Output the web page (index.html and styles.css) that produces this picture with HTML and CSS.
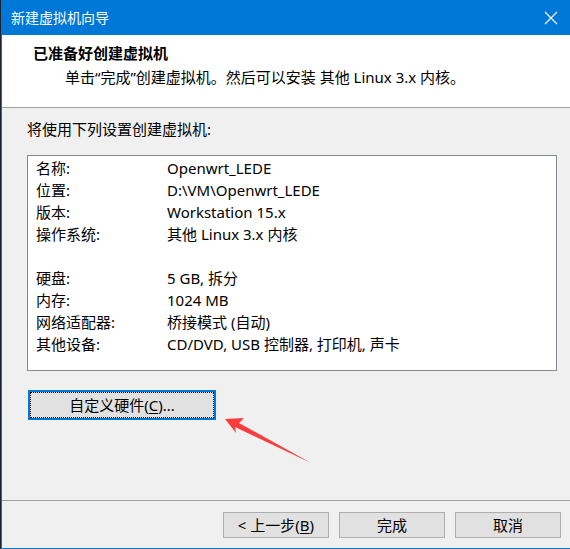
FILE: index.html
```html
<!DOCTYPE html>
<html lang="zh-CN">
<head>
<meta charset="utf-8">
<title>新建虚拟机向导</title>
<link rel="stylesheet" href="styles.css">
</head>
<body>
<div class="window">
  <div class="titlebar">
    <span class="title">新建虚拟机向导</span>
    <svg class="close" width="14" height="14" viewBox="0 0 14 14">
      <path d="M1 1 L13 13 M13 1 L1 13" stroke="#fff" stroke-width="1.1" fill="none"/>
    </svg>
  </div>

  <div class="header">
    <div class="heading">已准备好创建虚拟机</div>
    <div class="subtitle">单击“完成”创建虚拟机。然后可以安装 其他 Linux 3.x 内核。</div>
  </div>

  <div class="content">
    <div class="intro">将使用下列设置创建虚拟机:</div>
    <div class="summary">
      <div class="row"><span class="key">名称:</span><span class="val">Openwrt_LEDE</span></div>
      <div class="row"><span class="key">位置:</span><span class="val">D:\VM\Openwrt_LEDE</span></div>
      <div class="row"><span class="key">版本:</span><span class="val">Workstation 15.x</span></div>
      <div class="row"><span class="key">操作系统:</span><span class="val">其他 Linux 3.x 内核</span></div>
      <div class="row"></div>
      <div class="row"><span class="key">硬盘:</span><span class="val">5 GB, 拆分</span></div>
      <div class="row"><span class="key">内存:</span><span class="val">1024 MB</span></div>
      <div class="row"><span class="key">网络适配器:</span><span class="val">桥接模式 (自动)</span></div>
      <div class="row"><span class="key">其他设备:</span><span class="val">CD/DVD, USB 控制器, 打印机, 声卡</span></div>
    </div>
    <button class="btn btn-default">自定义硬件(<u>C</u>)...</button>
  </div>

  <div class="footer">
    <button class="btn">&lt; 上一步(<u>B</u>)</button>
    <button class="btn">完成</button>
    <button class="btn">取消</button>
  </div>

  <svg class="pointer" width="100" height="60" viewBox="0 0 100 60">
    <polygon points="0,5 19,4 14,9 86,49 10,13 11,19" fill="#fb3c3c"/>
  </svg>
</div>
</body>
</html>
```

FILE: styles.css
```css
html, body {
  margin: 0;
  padding: 0;
}

body {
  background: #1d2430;
  font-family: "Noto Sans", "Noto Sans CJK SC", sans-serif;
  font-size: 15px;
  color: #000;
}

.window {
  position: relative;
  margin-left: 1px;
  width: 569px;
  height: 549px;
  box-sizing: border-box;
  border-left: 1px solid #0078d7;
  border-bottom: 1px solid #0078d7;
  background: #f0f0f0;
  display: flex;
  flex-direction: column;
  overflow: hidden;
}

/* title bar */
.titlebar {
  height: 35px;
  flex: none;
  background: #0078d7;
  display: flex;
  align-items: center;
  justify-content: space-between;
  padding: 0 12px 0 9px;
}

.title {
  color: #fff;
  font-size: 14px;
  line-height: 20px;
  padding-top: 1px;
}

.close {
  display: block;
  margin-top: 1px;
}

/* white header panel */
.header {
  flex: none;
  background: #fff;
  border-bottom: 1px solid #a0a0a0;
  padding: 8px 0 0 31px;
  box-sizing: content-box;
  height: 64px;
}

.heading {
  font-weight: bold;
  line-height: 20px;
}

.subtitle {
  margin-top: 4px;
  padding-left: 32px;
  line-height: 20px;
}

/* main area */
.content {
  flex: 1;
  padding: 11px 13px 0 25px;
  display: flex;
  flex-direction: column;
  align-items: flex-start;
}

.intro {
  line-height: 20px;
}

.summary {
  margin-top: 16px;
  width: 530px;
  height: 216px;
  box-sizing: border-box;
  background: #fff;
  border: 1px solid #828790;
  padding: 1px 0 0 8px;
}

.row {
  display: grid;
  grid-template-columns: 131px 1fr;
  height: 22px;
  line-height: 22px;
  white-space: nowrap;
}

/* buttons */
.btn {
  font: inherit;
  color: #000;
  background: #e1e1e1;
  border: 1px solid #adadad;
  padding: 0;
  width: 106px;
  height: 26px;
  line-height: 22px;
  box-sizing: border-box;
}

.btn u {
  text-underline-offset: 2px;
}

.btn-default {
  margin: 19px 0 0 1px;
  width: 188px;
  height: 30px;
  border: 2px solid #0078d7;
  outline: 1px dotted #000;
  outline-offset: -3px;
}

.footer {
  flex: none;
  height: 47px;
  border-top: 1px solid #a0a0a0;
  box-sizing: content-box;
  display: flex;
  justify-content: flex-end;
  align-items: flex-start;
  gap: 10px;
  padding: 0 9px 0 0;
}

.footer .btn {
  margin-top: 11px;
}

/* annotation arrow drawn over the dialog */
.pointer {
  position: absolute;
  left: 223px;
  top: 414px;
  overflow: visible;
}
```
